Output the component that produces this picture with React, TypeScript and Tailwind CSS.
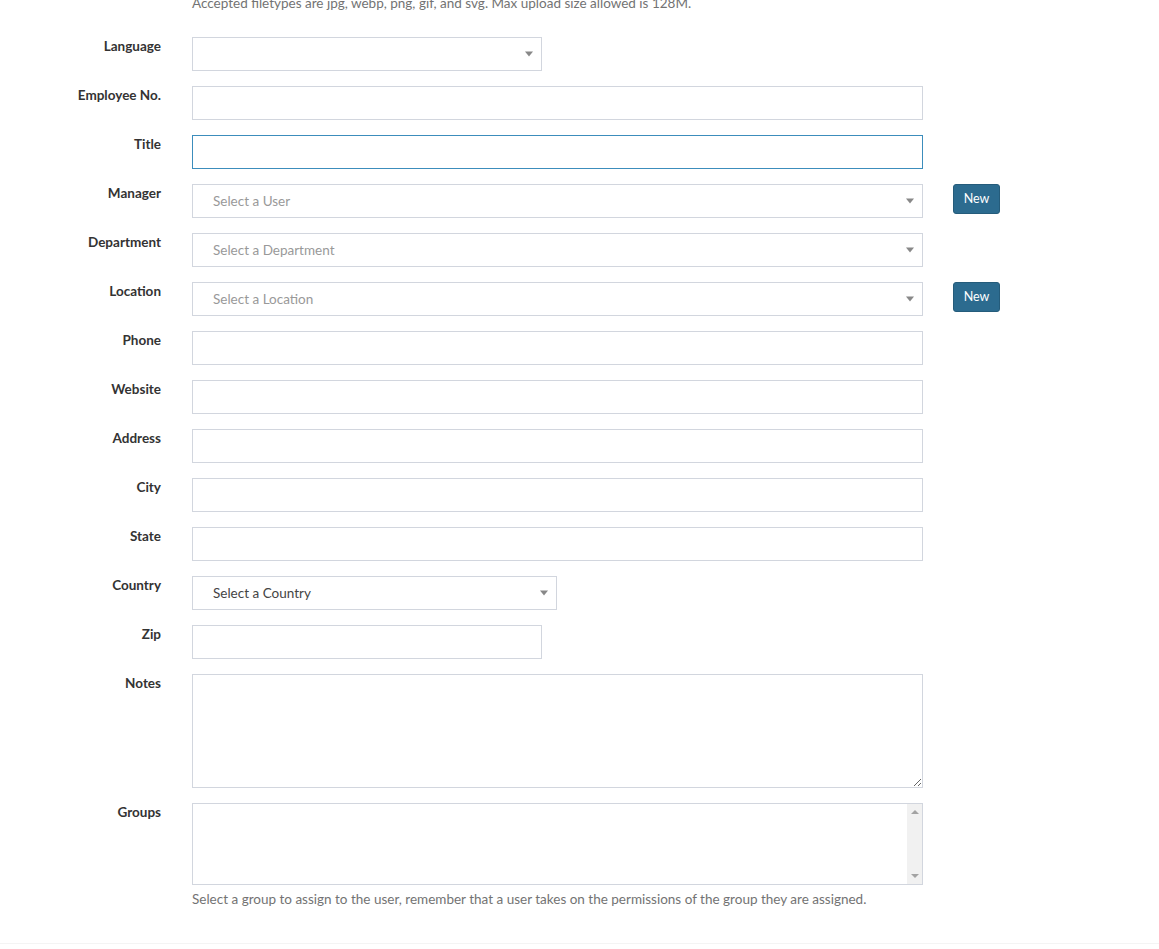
import React from 'react';

const font = { fontFamily: 'Lato, "Liberation Sans", sans-serif' };

const Caret = () => (
  <span className="absolute right-[8px] top-1/2 -translate-y-1/2 w-0 h-0 border-l-[4px] border-r-[4px] border-t-[5px] border-l-transparent border-r-transparent border-t-[#888]" />
);

interface RowProps {
  label: string;
  children: React.ReactNode;
  extra?: React.ReactNode;
}

const Label: React.FC<{ text: string }> = ({ text }) => (
  <label className="w-[177px] shrink-0 pr-[16px] text-right text-[13.5px] leading-[18px] font-bold text-[#333]">{text}</label>
);

const Row: React.FC<RowProps> = ({ label, children, extra }) => (
  <div className="flex items-start mb-[15px]">
    <Label text={label} />
    <div className="w-[761px] shrink-0 px-[15px]">{children}</div>
    {extra && <div className="px-[15px]">{extra}</div>}
  </div>
);

const TextInput: React.FC<{ focus?: boolean; width?: string }> = ({ focus, width = 'w-full' }) => (
  <input
    type="text"
    className={`${width} h-[34px] block px-3 text-[14px] text-[#555] bg-white border outline-none ${focus ? 'border-[#3c8dbc]' : 'border-[#d2d6de]'}`}
  />
);

const Select: React.FC<{ placeholder?: string; value?: string; width?: string }> = ({ placeholder, value, width = 'w-full' }) => (
  <div className={`${width} relative h-[34px] bg-white border border-[#d2d6de] flex items-center pl-[20px] text-[13.5px]`}>
    {placeholder && <span className="text-[#999]">{placeholder}</span>}
    {value && <span className="text-[#444]">{value}</span>}
    <Caret />
  </div>
);

const NewButton = () => (
  <button className="h-[30px] w-[47px] bg-[#2c6b8f] border border-[#255c7b] rounded-[3px] text-white text-[12.5px]">New</button>
);

export default function App() {
  return (
    <div className="w-[1159px] h-[949px] overflow-hidden bg-white" style={font}>
      <p className="ml-[192px] mt-[-7px] mb-[24px] text-[13.5px] leading-[20px] text-[#737373]">
        Accepted filetypes are jpg, webp, png, gif, and svg. Max upload size allowed is 128M.
      </p>

      <Row label="Language">
        <Select width="w-[350px]" />
      </Row>
      <Row label="Employee No.">
        <TextInput />
      </Row>
      <Row label="Title">
        <TextInput focus />
      </Row>
      <Row label="Manager" extra={<NewButton />}>
        <Select placeholder="Select a User" />
      </Row>
      <Row label="Department">
        <Select placeholder="Select a Department" />
      </Row>
      <Row label="Location" extra={<NewButton />}>
        <Select placeholder="Select a Location" />
      </Row>
      <Row label="Phone">
        <TextInput />
      </Row>
      <Row label="Website">
        <TextInput />
      </Row>
      <Row label="Address">
        <TextInput />
      </Row>
      <Row label="City">
        <TextInput />
      </Row>
      <Row label="State">
        <TextInput />
      </Row>
      <Row label="Country">
        <Select value="Select a Country" width="w-[365px]" />
      </Row>
      <Row label="Zip">
        <TextInput width="w-[350px]" />
      </Row>
      <Row label="Notes">
        <textarea className="w-full h-[114px] block border border-[#d2d6de] bg-white outline-none px-3 py-[6px] text-[14px]" />
      </Row>
      <div className="flex items-start">
        <Label text="Groups" />
        <div className="w-[761px] shrink-0 px-[15px]">
          <div className="h-[82px] border border-[#d2d6de] bg-white flex justify-end">
            <div className="w-[15px] h-full bg-[#f1f1f1] flex flex-col items-center justify-between py-[6px]">
              <span className="w-0 h-0 border-l-[4px] border-r-[4px] border-b-[4px] border-l-transparent border-r-transparent border-b-[#a3a3a3]" />
              <span className="w-0 h-0 border-l-[4px] border-r-[4px] border-t-[4px] border-l-transparent border-r-transparent border-t-[#a3a3a3]" />
            </div>
          </div>
          <p className="mt-[4px] text-[13.5px] leading-[20px] text-[#737373]">
            Select a group to assign to the user, remember that a user takes on the permissions of the group they are assigned.
          </p>
        </div>
      </div>
      <div className="mt-[34px] border-t border-[#f4f4f4]" />
    </div>
  );
}
